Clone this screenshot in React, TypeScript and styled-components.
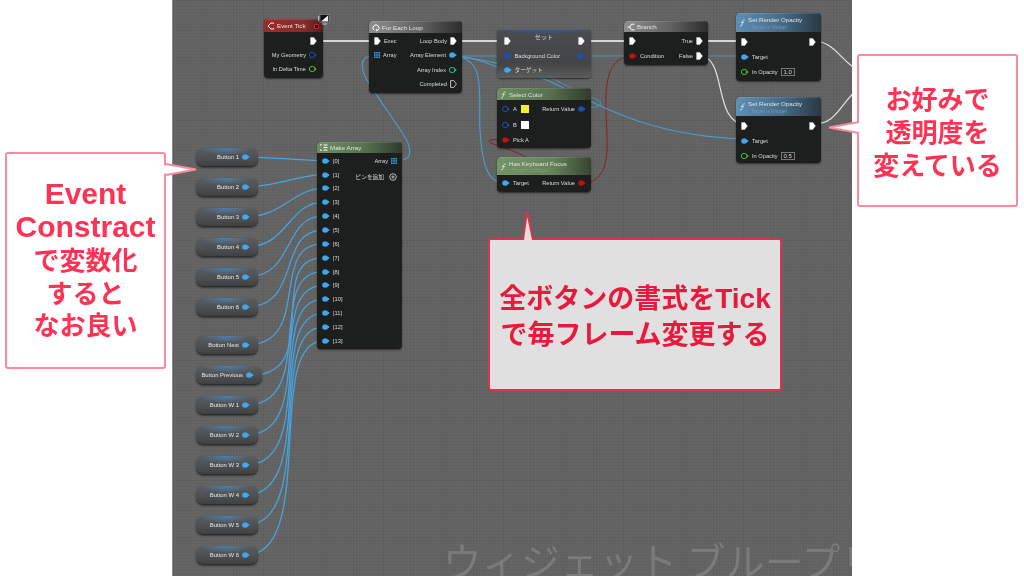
import React from "react";
import styled, { createGlobalStyle } from "styled-components";

const GlobalStyle = createGlobalStyle`
  html, body { margin: 0; padding: 0; background: #fff; }
  body { font-family: "Liberation Sans", "Noto Sans CJK JP", sans-serif; }
`;

const Page = styled.div`
  width: 1024px;
  height: 576px;
  display: grid;
  grid-template-columns: 172px 680px 172px;
  overflow: hidden;
  background: #fff;
`;

const Side = styled.aside<{ $top: number; $left: number }>`
  position: relative;
  z-index: 2;
  padding: ${(p) => p.$top}px 0 0 ${(p) => p.$left}px;
`;

const Canvas = styled.main`
  position: relative;
  height: 576px;
  overflow: hidden;
  background-color: #656565;
  background-image:
    linear-gradient(rgba(0, 0, 0, 0.03) 1px, transparent 1px),
    linear-gradient(90deg, rgba(0, 0, 0, 0.03) 1px, transparent 1px),
    linear-gradient(rgba(0, 0, 0, 0.03) 1px, transparent 1px),
    linear-gradient(90deg, rgba(0, 0, 0, 0.03) 1px, transparent 1px);
  background-size: 30px 30px, 30px 30px, 3px 3px, 3px 3px;
  border-left: 1px solid #8a8a8a;
  box-sizing: border-box;
`;

const Watermark = styled.div`
  position: absolute;
  left: 270px;
  top: 534px;
  white-space: nowrap;
  font: 400 38.5px/50px "Noto Sans CJK JP", sans-serif;
  letter-spacing: 0.6px;
  color: #7b7b7b;
  filter: blur(0.5px);
`;

const Wires = styled.svg`
  position: absolute;
  left: -172px;
  top: 0;
  width: 1024px;
  height: 576px;
  fill: none;
  filter: blur(0.25px);
`;

const Graph = styled.div`
  position: absolute;
  inset: 0;
  filter: blur(0.3px);
`;

const Node = styled.section<{ $x: number; $y: number; $w: number; $h: number; $ghost?: boolean }>`
  position: absolute;
  left: ${(p) => p.$x - 172}px;
  top: ${(p) => p.$y}px;
  width: ${(p) => p.$w}px;
  height: ${(p) => p.$h}px;
  display: flex;
  flex-direction: column;
  border-radius: 4px;
  overflow: hidden;
  background: ${(p) => (p.$ghost ? "linear-gradient(#4b4c4e, #434446 70%, #5c5c5c)" : "#1d1f1e")};
  box-shadow: 0 1px 2px rgba(0, 0, 0, 0.55);
  color: #dcdcdc;
  font-size: 5.7px;
  line-height: 8px;
`;

const tones: Record<string, string> = {
  red: "linear-gradient(90deg, #a32a2a, #852a2a 70%, #4a2020)",
  gray: "linear-gradient(90deg, #8e8e8e, #626262 55%, #2c2c2c)",
  green: "linear-gradient(90deg, #6d8f62, #58724f 55%, #2f3a2d)",
  lime: "linear-gradient(90deg, #749568, #64835a 60%, #37442f)",
  blue: "linear-gradient(90deg, #5f8fb5, #466a88 55%, #2a3845)",
  ghost: "radial-gradient(ellipse 60% 100% at 50% 0, #2f5aa0, transparent)",
};

const Header = styled.header<{ $tone: string; $h: number }>`
  flex: none;
  height: ${(p) => p.$h}px;
  display: flex;
  align-items: center;
  gap: 2px;
  padding: 0 3px;
  box-sizing: border-box;
  background: ${(p) => tones[p.$tone]};
  border-top: 1px solid rgba(255, 255, 255, 0.12);
`;

const HeaderText = styled.div`
  display: flex;
  flex-direction: column;
  color: #dfe4df;
  font-size: 6.2px;
  line-height: 7.5px;
  white-space: nowrap;
`;

const GhostTitle = styled(HeaderText)`
  padding-bottom: 10px;
  color: #c9d3de;
`;

const SubTitle = styled.span<{ $tone: string }>`
  font-size: 5px;
  line-height: 6px;
  padding-left: 3px;
  color: ${(p) => (p.$tone === "blue" ? "#7fa0ba" : "#87a37f")};
  opacity: 0.8;
`;

const Body = styled.div<{ $pad: number; $side?: number }>`
  display: flex;
  flex-direction: column;
  padding: ${(p) => p.$pad}px ${(p) => p.$side ?? 5}px 0;
`;

const Row = styled.div<{ $h: number }>`
  flex: none;
  height: ${(p) => p.$h}px;
  display: flex;
  align-items: center;
  justify-content: space-between;
  white-space: nowrap;
`;

const PinSide = styled.div<{ $gap?: number; $drop?: number }>`
  display: flex;
  align-items: center;
  gap: ${(p) => p.$gap ?? 3}px;
  padding-top: ${(p) => p.$drop ?? 0}px;
`;

const ValueBox = styled.span`
  display: inline-block;
  border: 1px solid #777;
  padding: 0 2px;
  font-size: 6px;
  line-height: 6px;
`;

const Swatch = styled.span<{ $color: string }>`
  width: 8px;
  height: 8px;
  background: ${(p) => p.$color};
  border: 0.5px solid #222;
`;

const DelegatePin = styled.span`
  margin-left: auto;
  margin-right: 1px;
  width: 3px;
  height: 3px;
  border: 1px solid #d51c1c;
  border-radius: 1px;
  background: #300;
`;

const Badge = styled.svg`
  position: absolute;
  left: ${317 - 172}px;
  top: 14px;
  width: 12px;
  height: 11px;
`;

const VarPill = styled.div<{ $x: number; $y: number; $w: number }>`
  position: absolute;
  left: ${(p) => p.$x - 172}px;
  top: ${(p) => p.$y - 9}px;
  width: ${(p) => p.$w}px;
  height: 19px;
  display: flex;
  align-items: center;
  justify-content: flex-end;
  gap: 3px;
  padding-right: 8px;
  box-sizing: border-box;
  border-radius: 7px;
  background:
    radial-gradient(ellipse 40% 40% at 48% 0, rgba(70, 150, 215, 0.6), transparent),
    linear-gradient(#5a5d60, #4c4e50 60%, #3f4041);
  border-bottom: 1px solid #2e2e2e;
  box-shadow: 0 1px 2px rgba(0, 0, 0, 0.45);
  color: #e6e6e6;
  font-size: 5.9px;
  white-space: nowrap;
`;

const Callout = styled.div<{ $w: number; $h: number; $accent: string; $fill: string; $ink: string; $size: number; $lh: number; $lift?: number }>`
  position: relative;
  width: ${(p) => p.$w}px;
  height: ${(p) => p.$h}px;
  box-sizing: border-box;
  display: flex;
  align-items: center;
  justify-content: center;
  text-align: center;
  padding-bottom: ${(p) => p.$lift ?? 0}px;
  border: 2px solid ${(p) => p.$accent};
  border-radius: 3px;
  background: ${(p) => p.$fill};
  color: ${(p) => p.$ink};
  font: 700 ${(p) => p.$size}px/${(p) => p.$lh}px "Noto Sans CJK JP", sans-serif;
  filter: blur(0.25px);
`;

const Latin = styled.span<{ $size: number }>`
  font-family: "Liberation Sans", sans-serif;
  font-size: ${(p) => p.$size}px;
`;

const OverCanvas = styled.div`
  position: absolute;
  left: 315px;
  top: 238px;
`;

const Tail = styled.svg`
  position: absolute;
  overflow: visible;
  left: 0;
  top: 0;
  width: 1px;
  height: 1px;
`;

const Line = styled.span`
  display: block;
  white-space: nowrap;
`;

/* ---------- pins ---------- */
const PinSvg = styled.svg`
  flex: none;
  display: block;
`;

const Exec = ({ hollow }: { hollow?: boolean }) => (
  <PinSvg width="7" height="8" viewBox="0 0 7 8">
    <path d="M0.6 0.6H3.8L6.4 4L3.8 7.4H0.6Z" fill={hollow ? "none" : "#fff"} stroke="#fff" strokeWidth={hollow ? 0.7 : 0.4} />
  </PinSvg>
);

const Data = ({ color = "#3fa9ee", hollow }: { color?: string; hollow?: boolean }) => (
  <PinSvg width="8" height="6" viewBox="0 0 8 6">
    <ellipse cx="3.2" cy="3" rx="2.9" ry="2.6" fill={hollow ? "none" : color} stroke={color} strokeWidth={hollow ? 1 : 0.3} />
    <path d="M5.6 1.4L7.9 3L5.6 4.6Z" fill={color} />
  </PinSvg>
);

const ArrayPin = () => (
  <PinSvg width="6" height="6" viewBox="0 0 6 6">
    <path d="M0 0h1.6v1.6H0zM2.2 0h1.6v1.6H2.2zM4.4 0H6v1.6H4.4zM0 2.2h1.6v1.6H0zM2.2 2.2h1.6v1.6H2.2zM4.4 2.2H6v1.6H4.4zM0 4.4h1.6V6H0zM2.2 4.4h1.6V6H2.2zM4.4 4.4H6V6H4.4z" fill="#3f9fe6" />
  </PinSvg>
);

const AddIcon = () => (
  <PinSvg width="8" height="8" viewBox="0 0 8 8">
    <circle cx="4" cy="4" r="3.3" fill="none" stroke="#ddd" strokeWidth="0.8" />
    <path d="M4 2.4V5.6M2.4 4H5.6" stroke="#ddd" strokeWidth="0.8" />
  </PinSvg>
);

const FnIcon = () => (
  <PinSvg width="7" height="8" viewBox="0 0 7 8">
    <path d="M5.8 1C4 0.6 3.7 1.6 3.4 3.4C3.1 5.4 2.9 7.4 1 7M1.8 3.4H5" fill="none" stroke="#dfe8df" strokeWidth="0.8" />
  </PinSvg>
);

const EventIcon = () => (
  <PinSvg width="8" height="8" viewBox="0 0 8 8">
    <path d="M4 1L1 4L4 7M7 1.6A3.2 3.2 0 0 0 4 1M7 6.4A3.2 3.2 0 0 1 4 7" fill="none" stroke="#fff" strokeWidth="1" />
  </PinSvg>
);

const LoopIcon = () => (
  <PinSvg width="8" height="8" viewBox="0 0 8 8">
    <path d="M2 6.2A3 3 0 1 1 6 6.2L4.4 6.2" fill="none" stroke="#fff" strokeWidth="1" />
    <path d="M5 4.8L3.4 6.2L5 7.6Z" fill="#fff" />
  </PinSvg>
);

const BranchIcon = () => (
  <PinSvg width="8" height="8" viewBox="0 0 8 8">
    <path d="M7.5 1.2H4.6L2.6 4L4.6 6.8H7.5M0.5 4H2.6" fill="none" stroke="#fff" strokeWidth="1" />
  </PinSvg>
);

const ArrayIcon = () => (
  <PinSvg width="8" height="7" viewBox="0 0 8 7">
    <path d="M2 0.5H0.5V2M0.5 5V6.5H2" fill="none" stroke="#fff" strokeWidth="0.7" />
    <path d="M3.5 1H7.5M3.5 3.5H7.5M3.5 6H7.5" stroke="#fff" strokeWidth="1" />
  </PinSvg>
);

/* ---------- data ---------- */
const BLUE = "#48a3de";
const NAVY = "#1e4fb0";
const GREEN = "#4fbf2a";
const RED = "#b81414";

const buttons: [string, number, number][] = [
  ["Button 1", 157, 62], ["Button 2", 187, 62], ["Button 3", 217, 62], ["Button 4", 247, 62],
  ["Button 5", 277, 62], ["Button 6", 307, 62], ["Button Next", 345, 62], ["Button Previous", 375, 66],
  ["Button W 1", 405, 62], ["Button W 2", 435, 62], ["Button W 3", 465, 62], ["Button W 4", 495, 62],
  ["Button W 5", 525, 62], ["Button W 6", 555, 62],
];

const arrayY = (i: number) => 160.7 + 13.87 * i;

const buttonWire = (y: number, i: number) => {
  const ty = arrayY(i);
  const off = Math.min(72, 22 + Math.abs(y - ty) * 0.45);
  const start = i === 7 ? 251 : 245;
  return `M${start} ${y}C${start + off} ${y} ${322 - off * 0.82} ${ty} 322 ${ty}`;
};

const App = () => (
  <Page>
    <GlobalStyle />
    <Side $top={152} $left={5}>
      <Callout $w={161} $h={217} $accent="#fb8a9c" $fill="#fff" $ink="#fd3355" $size={26} $lh={32.3} $lift={4}>
        <div>
          <Line><Latin $size={30}>Event</Latin></Line>
          <Line><Latin $size={30}>Constract</Latin></Line>
          <Line>で変数化</Line>
          <Line>すると</Line>
          <Line>なお良い</Line>
        </div>
        <Tail>
          <path d="M159 10L189 15.5L159 21" fill="#fff" stroke="#fb8a9c" strokeWidth="2" />
          <path d="M157 11.5H160V19.5H157Z" fill="#fff" />
        </Tail>
      </Callout>
    </Side>

    <Canvas>
      <Watermark>ウィジェット ブループリ</Watermark>
      <Wires viewBox="0 0 1024 576">
        <g stroke="#fff" strokeWidth="1.6">
          <path d="M315 41H373" />
          <path d="M453 41H505" />
          <path d="M582 41H632" />
          <path d="M699 41H744" />
        </g>
        <g stroke="#e4e4e4" strokeWidth="1.2">
          <path d="M699 56C726 56 712 124 744 124" />
          <path d="M812 41C832 41 838 58 856 70" />
          <path d="M812 124C836 124 838 105 856 90" />
        </g>
        <g stroke="#8e1f1f" strokeWidth="1">
          <path d="M582 183C612 181 606 145 605 110C604 80 608 56 632 56" />
          <path d="M582 183C570 184 540 166 523 156C508 148 480 142 490 140C494 139 498 140 503 140" />
        </g>
        <g stroke={BLUE} strokeWidth="1.15" opacity="0.9">
          <path d="M402 160C412 158 410 146 402 134C392 118 378 100 366 80C358 66 360 56 372 56" />
          <path d="M455 56C480 58 490 66 505 70" />
          <path d="M455 56C480 56 600 56 745 56" strokeWidth="0.8" />
          <path d="M455 56C490 60 515 68 548 81C590 100 640 136 745 139" />
          <path d="M455 56C486 60 477 96 479 130C481 162 486 183 503 183" />
          <path d="M582 108C604 108 604 102 590 97C572 90 530 66 505 58" strokeWidth="0.8" />
        </g>
        <g stroke={BLUE} strokeWidth="1.25">
          {buttons.map(([name, y], i) => (
            <path key={name} d={buttonWire(y, i)} />
          ))}
        </g>
      </Wires>

      <Graph>
        <Node $x={263} $y={19} $w={59} $h={59}>
          <Header $tone="red" $h={13}><EventIcon /><HeaderText>Event Tick</HeaderText><DelegatePin /></Header>
          <Body $pad={1.7} $side={6}>
            <Row $h={14.2}><span /><PinSide><Exec /></PinSide></Row>
            <Row $h={14.2}><span /><PinSide>My Geometry <Data color={NAVY} hollow /></PinSide></Row>
            <Row $h={14.2}><span /><PinSide>In Delta Time <Data color={GREEN} hollow /></PinSide></Row>
          </Body>
        </Node>
        <Badge viewBox="0 0 12 11">
          <rect x="2" y="0.5" width="9" height="8" fill="#111" stroke="#999" strokeWidth="0.6" />
          <path d="M3 7.5L10 1.5V7.5Z" fill="#eee" />
          <path d="M0.6 2V7M4 10H9" stroke="#ddd" strokeWidth="0.8" />
        </Badge>

        <Node $x={368} $y={21} $w={93} $h={72}>
          <Header $tone="gray" $h={12}><LoopIcon /><HeaderText>For Each Loop</HeaderText></Header>
          <Body $pad={1}>
            <Row $h={14.3}><PinSide><Exec />Exec</PinSide><PinSide>Loop Body <Exec /></PinSide></Row>
            <Row $h={14.3}><PinSide><ArrayPin />Array</PinSide><PinSide>Array Element <Data /></PinSide></Row>
            <Row $h={14.3}><span /><PinSide>Array Index <Data color="#2fbf8a" hollow /></PinSide></Row>
            <Row $h={14.3}><span /><PinSide>Completed <Exec hollow /></PinSide></Row>
          </Body>
        </Node>

        <Node $x={496} $y={29} $w={94} $h={49} $ghost>
          <Header $tone="ghost" $h={5} />
          <Body $pad={0} $side={6.5}>
            <Row $h={14.5}><Exec /><GhostTitle>セット</GhostTitle><Exec /></Row>
            <Row $h={14.5}><PinSide><Data color={NAVY} />Background Color</PinSide><PinSide><Data color={NAVY} /></PinSide></Row>
            <Row $h={14.5}><PinSide><Data />ターゲット</PinSide><span /></Row>
          </Body>
        </Node>

        <Node $x={496} $y={88} $w={94} $h={60}>
          <Header $tone="green" $h={12}><FnIcon /><HeaderText>Select Color</HeaderText></Header>
          <Body $pad={1}>
            <Row $h={16}><PinSide><Data color={NAVY} hollow />A<Swatch $color="#f6ee3c" /></PinSide><PinSide>Return Value <Data color={NAVY} /></PinSide></Row>
            <Row $h={16}><PinSide><Data color={NAVY} hollow />B<Swatch $color="#fff" /></PinSide></Row>
            <Row $h={14}><PinSide><Data color={RED} />Pick A</PinSide></Row>
          </Body>
        </Node>

        <Node $x={496} $y={157} $w={94} $h={35}>
          <Header $tone="lime" $h={18}><FnIcon /><HeaderText>Has Keyboard Focus<SubTitle $tone="green">Target is Widget</SubTitle></HeaderText></Header>
          <Body $pad={1}>
            <Row $h={14}><PinSide><Data />Target</PinSide><PinSide>Return Value <Data color={RED} /></PinSide></Row>
          </Body>
        </Node>

        <Node $x={623} $y={21} $w={84} $h={44}>
          <Header $tone="gray" $h={11}><BranchIcon /><HeaderText>Branch</HeaderText></Header>
          <Body $pad={2}>
            <Row $h={14.5}><PinSide><Exec /></PinSide><PinSide>True <Exec /></PinSide></Row>
            <Row $h={14.5}><PinSide><Data color={RED} />Condition</PinSide><PinSide>False <Exec /></PinSide></Row>
          </Body>
        </Node>

        {[{ y: 13, h: 68, v: "1.0" }, { y: 97, h: 66, v: "0.5" }].map((n) => (
          <Node key={n.y} $x={735} $y={n.y} $w={85} $h={n.h}>
            <Header $tone="blue" $h={18.5}><FnIcon /><HeaderText>Set Render Opacity<SubTitle $tone="blue">Target is Widget</SubTitle></HeaderText></Header>
            <Body $pad={2.5}>
              <Row $h={15}><Exec /><Exec /></Row>
              <Row $h={15}><PinSide><Data />Target</PinSide></Row>
              <Row $h={15}><PinSide><Data color={GREEN} hollow />In Opacity <ValueBox>{n.v}</ValueBox></PinSide></Row>
            </Body>
          </Node>
        ))}

        <Node $x={316} $y={142} $w={85} $h={207}>
          <Header $tone="green" $h={10.5}><ArrayIcon /><HeaderText>Make Array</HeaderText></Header>
          <Body $pad={1.3}>
            {buttons.map(([name], i) => (
              <Row key={name} $h={13.87}>
                <PinSide>
                  <Data />
                  {`[${i}]`}
                </PinSide>
                {i === 0 && <PinSide>Array <ArrayPin /></PinSide>}
                {i === 1 && <PinSide $gap={5} $drop={5}>ピンを追加 <AddIcon /></PinSide>}
              </Row>
            ))}
          </Body>
        </Node>

        {buttons.map(([name, y, w]) => (
          <VarPill key={name} $x={195} $y={y} $w={w}>
            {name}
            <Data />
          </VarPill>
        ))}
      </Graph>

      <OverCanvas>
        <Callout $w={294} $h={153} $accent="#d8334f" $fill="#e0e0e0" $ink="#e8193c" $size={27} $lh={33.5}>
          <div>
            <Line>全ボタンの書式を<Latin $size={28}>Tick</Latin></Line>
            <Line>で毎フレーム変更する</Line>
          </div>
          <Tail>
            <path d="M33 0L37 -29L43 0" fill="#e0e0e0" stroke="#d8334f" strokeWidth="2" />
            <path d="M34 -0.5H42V2H34Z" fill="#e0e0e0" />
          </Tail>
        </Callout>
      </OverCanvas>
    </Canvas>

    <Side $top={54} $left={5}>
      <Callout $w={161} $h={153} $accent="#fb8a9c" $fill="#fff" $ink="#fd3355" $size={26} $lh={33}>
        <div>
          <Line>お好みで</Line>
          <Line>透明度を</Line>
          <Line>変えている</Line>
        </div>
        <Tail>
          <path d="M0 66L-30 71.5L0 77" fill="#fff" stroke="#fb8a9c" strokeWidth="2" />
          <path d="M-1 67.5H2V75.5H-1Z" fill="#fff" />
        </Tail>
      </Callout>
    </Side>
  </Page>
);

export default App;
